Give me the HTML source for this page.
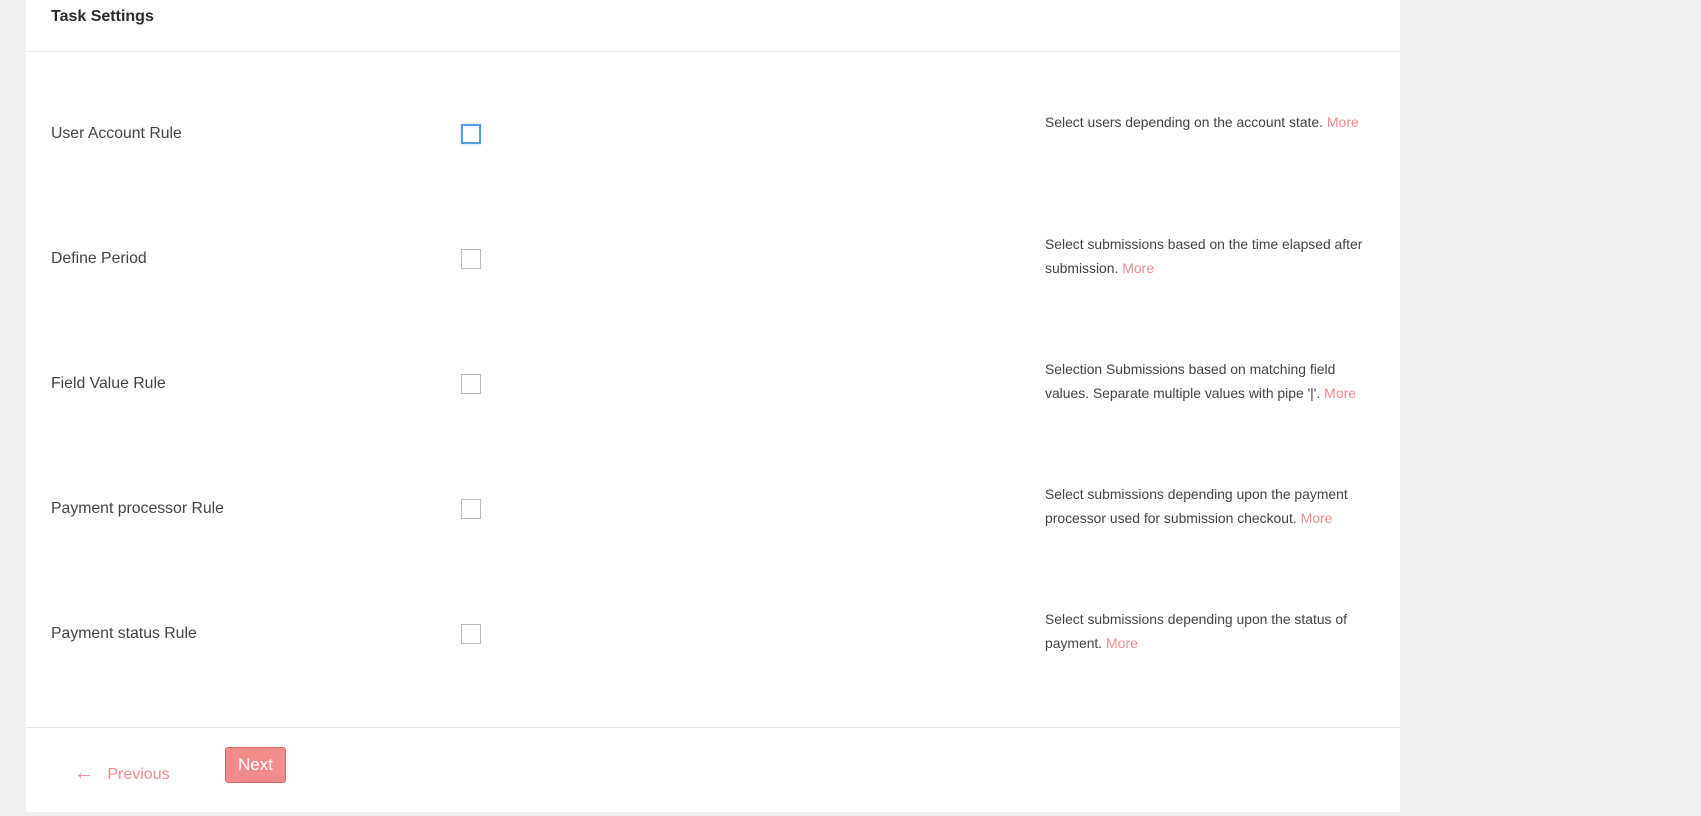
<!DOCTYPE html>
<html><head><meta charset="utf-8"><style>
*{margin:0;padding:0;box-sizing:border-box}
body{width:1701px;height:816px;background:#f0f0f0;font-family:"Liberation Sans",sans-serif;position:relative;overflow:hidden}
.panel{position:absolute;left:26px;top:0;width:1374px;height:812px;background:#fff}
.title{position:absolute;left:25px;top:8px;font-size:16px;font-weight:bold;color:#2a2a2a}
.hr{position:absolute;left:0;width:1374px;height:1px;background:#e8e8e8}
.lbl{position:absolute;left:25px;font-size:15.8px;color:#444;line-height:20px}
.cb{position:absolute;left:435px;width:20px;height:20px;border:1px solid #bbb;background:#fff}
.cb.f{border:2px solid #5a9ee0;box-shadow:0 0 3px #b8d6f5}
.desc{position:absolute;left:1019px;width:326px;font-size:13.9px;color:#444;line-height:24px}
.desc span{color:#f28b8b;font-size:14px}
.prev{position:absolute;left:48px;top:762px;font-size:16px;color:#f28b8b}
.next{position:absolute;left:199px;top:747px;width:61px;height:36px;background:#f28b8b;border:1px solid #d96a6a;border-radius:3px;color:#fff;font-size:17px;text-align:center;line-height:33px}
</style></head><body>
<div class="panel">
<div class="title">Task Settings</div>
<div class="hr" style="top:51px"></div>

<div class="lbl" style="top:124px">User Account Rule</div>
<div class="cb f" style="top:124px"></div>
<div class="desc" style="top:110px">Select users depending on the account state. <span>More</span></div>

<div class="lbl" style="top:249px">Define Period</div>
<div class="cb" style="top:249px"></div>
<div class="desc" style="top:232px">Select submissions based on the time elapsed after submission. <span>More</span></div>

<div class="lbl" style="top:374px">Field Value Rule</div>
<div class="cb" style="top:374px"></div>
<div class="desc" style="top:357px">Selection Submissions based on matching field values. Separate multiple values with pipe '|'. <span>More</span></div>

<div class="lbl" style="top:499px">Payment processor Rule</div>
<div class="cb" style="top:499px"></div>
<div class="desc" style="top:482px">Select submissions depending upon the payment processor used for submission checkout. <span>More</span></div>

<div class="lbl" style="top:624px">Payment status Rule</div>
<div class="cb" style="top:624px"></div>
<div class="desc" style="top:607px">Select submissions depending upon the status of payment. <span>More</span></div>

<div class="hr" style="top:727px"></div>
<div class="prev"><span style="font-size:20px">&larr;</span>&nbsp;&nbsp; Previous</div>
<div class="next">Next</div>
</div>
</body></html>
